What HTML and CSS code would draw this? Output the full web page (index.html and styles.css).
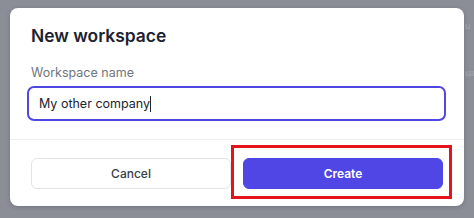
FILE: index.html
```html
<!DOCTYPE html>
<html lang="en">
<head>
    <meta charset="UTF-8">
    <meta name="viewport" content="width=device-width, initial-scale=1.0">
    <title>New workspace</title>
    <link rel="stylesheet" href="styles.css">
</head>
<body>
    <div class="screen">
        <div class="modal">
            <div class="modal-body">
                <h2>New workspace</h2>
                <label for="ws-name">Workspace name</label>
                <div class="field">
                    <span class="value">My other company</span><span class="caret"></span>
                </div>
            </div>
            <div class="modal-footer">
                <button class="btn btn-cancel">Cancel</button>
                <button class="btn btn-create">Create</button>
            </div>
        </div>
        <!-- restos da pagina atras do overlay -->
        <div class="behind">
            <span class="line-1">u</span>
            <span class="line-2">ua</span>
        </div>
    </div>
</body>
</html>
```

FILE: styles.css
```css
body {
    margin: 0;
    padding: 0;
    font-family: Inter, "Noto Sans", sans-serif;
    background-color: #8b8e96;
    width: 474px;
    height: 218px;
    overflow: hidden;
}

.screen {
    display: flex;
    padding: 8px 0 0 10px;
}

/* Janela do modal */
.modal {
    flex: 0 0 454px;
    height: 198px;
    background-color: white;
    border-radius: 8px;
    box-shadow: 0 1px 4px rgba(40, 42, 50, 0.25);
    display: flex;
    flex-direction: column;
}

.modal-body {
    padding: 16px 21px 0 21px;
    display: flex;
    flex-direction: column;
}

.modal-body h2 {
    margin: 0;
    font-size: 17.4px;
    line-height: 24px;
    font-weight: 600;
    color: #1c2230;
}

.modal-body label {
    margin-top: 16px;
    font-size: 12.5px;
    line-height: 18px;
    color: #70747e;
}

.field {
    margin: 4px -3px 0 -4px;
    height: 35px;
    box-sizing: border-box;
    border: 2px solid #5046e4;
    border-radius: 7px;
    padding: 0 10px;
    display: flex;
    align-items: center;
    font-size: 12.5px;
    color: #20242e;
}

.caret {
    display: inline-block;
    width: 1px;
    height: 16px;
    background-color: #20242e;
}

.modal-footer {
    margin-top: 18px;
    border-top: 1px solid #efeff2;
    padding: 18px 21px 0 21px;
    display: flex;
    gap: 12px;
}

.btn {
    flex: 1 1 0;
    min-width: 0;
    height: 31px;
    border-radius: 6px;
    font-family: Inter, "Noto Sans", sans-serif;
    font-size: 12px;
    font-weight: 500;
    cursor: pointer;
}

.btn-cancel {
    background-color: white;
    border: 1px solid #e2e3e8;
    color: #383c46;
}

.btn-create {
    position: relative;
    background-color: #4f46e5;
    border: 1px solid #4f46e5;
    color: white;
    font-weight: 600;
}

/* marcacao vermelha em volta do botao */
.btn-create::after {
    content: "";
    position: absolute;
    top: -14px;
    bottom: -11px;
    left: -13px;
    right: -10px;
    border: 3px solid #e3141b;
}

.behind {
    flex: 1;
    display: flex;
    flex-direction: column;
    padding-left: 1px;
    font-size: 9px;
    letter-spacing: -0.5px;
    color: #a3a6ad;
    white-space: nowrap;
}

.behind .line-1 {
    margin-top: 12px;
}

.behind .line-2 {
    margin-top: 36px;
}
```
